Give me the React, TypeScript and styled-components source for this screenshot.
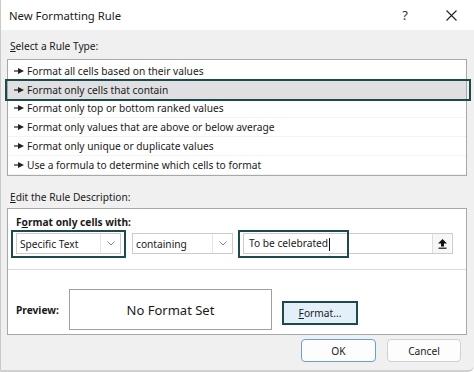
import styled, { createGlobalStyle } from "styled-components";
import { FC, PropsWithChildren } from "react";

const GlobalStyle = createGlobalStyle`
  html, body {
    margin: 0;
    padding: 0;
    background: #ffffff;
  }
  * {
    box-sizing: border-box;
  }
`;

const TEAL = "#1d4a4a";
const FONT = `"Noto Sans", "Open Sans", "Liberation Sans", sans-serif`;
const TEXT_SIZE = "10.2px";

const Window = styled.div`
  display: flex;
  flex-direction: column;
  width: 474px;
  height: 372px;
  background: #f0f0f0;
  font-family: ${FONT};
  color: #1a1a1a;
  overflow: hidden;
  border-left: 1px solid #c9c9c9;
  border-bottom: 2px solid #d0d0d0;
  border-bottom-right-radius: 6px;
`;

const TitleBar = styled.div`
  display: flex;
  align-items: center;
  height: 30px;
  flex-shrink: 0;
  background: #ffffff;
  padding-left: 8px;
`;

const Title = styled.div`
  flex: 1;
  font-size: 11.3px;
  color: #1a1a1a;
`;

const TitleIcon = styled.div`
  display: flex;
  align-items: center;
  justify-content: center;
  width: 46px;
  height: 30px;
  font-size: 13px;
  color: #333;
`;

const Content = styled.div`
  display: flex;
  flex-direction: column;
  padding: 0 7px 0 6px;
`;

const SectionLabel = styled.div<{ top: number }>`
  font-size: ${TEXT_SIZE};
  line-height: 15px;
  margin-top: ${({ top }) => top}px;
  padding-left: 3px;
`;

const Key = styled.span`
  text-decoration: underline;
  text-underline-offset: 1px;
`;

const ListBox = styled.div`
  display: flex;
  flex-direction: column;
  margin-top: 5px;
  height: 117px;
  background: #ffffff;
  border: 1px solid #a8a8a8;
  padding-top: 2px;
`;

const RuleRow = styled.div<{ selected?: boolean }>`
  position: relative;
  display: flex;
  align-items: center;
  gap: 3px;
  height: 18.8px;
  padding-left: 6px;
  font-size: ${TEXT_SIZE};
  background: ${({ selected }) => (selected ? "#e0e0e3" : "transparent")};
  border-bottom: 1px solid ${({ selected }) => (selected ? "transparent" : "#f3f3f3")};

  &::after {
    content: "";
    display: ${({ selected }) => (selected ? "block" : "none")};
    position: absolute;
    left: -3px;
    right: -5px;
    top: -2px;
    bottom: -2px;
    border: 2px solid ${TEAL};
  }
`;

const Arrow: FC = () => (
  <svg width="10" height="6" viewBox="0 0 10 6">
    <rect x="0" y="2.4" width="5" height="1.2" fill="#222" />
    <polygon points="4,0 10,3 4,6" fill="#222" />
  </svg>
);

const DescBox = styled.div`
  display: flex;
  flex-direction: column;
  margin-top: 3px;
  height: 127px;
  background: #ffffff;
  border: 1px solid #a8a8a8;
`;

const DescHeading = styled.div`
  font-size: ${TEXT_SIZE};
  font-weight: 700;
  line-height: 15px;
  padding: 6px 0 0 8px;
`;

const ControlsRow = styled.div`
  display: flex;
  align-items: center;
  gap: 6px;
  padding: 0 13px 0 3px;
  height: 27px;
`;

const FocusRing = styled.div`
  display: flex;
  border: 2px solid ${TEAL};
  padding: 1.5px 3px;
`;

const Select = styled.div<{ width: number }>`
  display: flex;
  align-items: center;
  width: ${({ width }) => width}px;
  height: 21px;
  background: #ffffff;
  border: 1px solid #cccccc;
  font-size: ${TEXT_SIZE};
  padding-left: 3px;
`;

const SelectText = styled.div`
  flex: 1;
`;

const SelectChevron = styled.div`
  display: flex;
  align-items: center;
  justify-content: center;
  width: 20px;
  height: 100%;
  border-left: 1px solid #e6e6e6;
`;

const Chevron: FC = () => (
  <svg width="8" height="5" viewBox="0 0 8 5">
    <polyline points="0.5,0.5 4,4 7.5,0.5" fill="none" stroke="#8a8a8a" strokeWidth="1" />
  </svg>
);

const TextInput = styled.div`
  position: relative;
  display: flex;
  align-items: center;
  flex: 1;
  height: 21px;
  margin-left: 4px;
  background: #ffffff;
  border: 1px solid #cccccc;
  font-size: ${TEXT_SIZE};
  padding-left: 5px;

  &::after {
    content: "";
    position: absolute;
    left: -6px;
    top: -4px;
    width: 107px;
    bottom: -5px;
    border: 2px solid ${TEAL};
  }
`;

const Caret = styled.span`
  display: inline-block;
  width: 1px;
  height: 13px;
  background: #111;
  vertical-align: middle;
  margin-left: 1px;
`;

const InputText = styled.div`
  flex: 1;
`;

const CollapseButton = styled.div`
  display: flex;
  align-items: center;
  justify-content: center;
  width: 19px;
  height: 19px;
  margin-right: 1px;
  background: #f7f7f7;
  border-left: 1px solid #dddddd;
`;

const UploadArrow: FC = () => (
  <svg width="9" height="10" viewBox="0 0 9 10">
    <polygon points="4.5,0 9,4.5 6,4.5 6,7.5 3,7.5 3,4.5 0,4.5" fill="#111" />
    <rect x="0.5" y="8.6" width="8" height="1.2" fill="#111" />
  </svg>
);

const Divider = styled.div`
  height: 1px;
  background: #dadada;
  margin-top: 12px;
`;

const PreviewRow = styled.div`
  display: flex;
  align-items: center;
  padding: 19px 0 0 8px;
`;

const PreviewLabel = styled.div`
  width: 53px;
  font-size: ${TEXT_SIZE};
  font-weight: 700;
`;

const PreviewBox = styled.div`
  display: flex;
  align-items: center;
  justify-content: center;
  width: 203px;
  height: 41px;
  border: 1px solid #a0a0a0;
  font-size: 13px;
`;

const Button = styled.div<{ focused?: boolean; primary?: boolean; width: number }>`
  display: flex;
  align-items: center;
  justify-content: center;
  width: ${({ width }) => width}px;
  height: ${({ focused }) => (focused ? 24 : 23)}px;
  font-size: ${TEXT_SIZE};
  background: ${({ focused }) => (focused ? "#e3eff9" : "#fdfdfd")};
  border: ${({ focused, primary }) =>
    focused ? `2px solid ${TEAL}` : primary ? "1px solid #6a9fcf" : "1px solid #d0d0d0"};
  border-radius: ${({ focused }) => (focused ? 0 : 4)}px;
`;

const FormatButton = styled(Button)`
  margin-left: 10px;
  margin-top: 6px;
`;

const Footer = styled.div`
  display: flex;
  justify-content: flex-end;
  gap: 11px;
  margin-top: 4px;
  padding-right: 6px;
`;

const ListItem: FC<PropsWithChildren<{ selected?: boolean }>> = ({ selected, children }) => (
  <RuleRow selected={selected}>
    <Arrow />
    <span>{children}</span>
  </RuleRow>
);

const rules = [
  "Format all cells based on their values",
  "Format only cells that contain",
  "Format only top or bottom ranked values",
  "Format only values that are above or below average",
  "Format only unique or duplicate values",
  "Use a formula to determine which cells to format",
];

export default function App() {
  return (
    <>
      <GlobalStyle />
      <Window>
        <TitleBar>
          <Title>New Formatting Rule</Title>
          <TitleIcon>?</TitleIcon>
          <TitleIcon>
            <svg width="11" height="11" viewBox="0 0 11 11">
              <path d="M0.5 0.5 L10.5 10.5 M10.5 0.5 L0.5 10.5" stroke="#222" strokeWidth="1.1" />
            </svg>
          </TitleIcon>
        </TitleBar>
        <Content>
          <SectionLabel top={9}>
            <Key>S</Key>elect a Rule Type:
          </SectionLabel>
          <ListBox>
            {rules.map((r, i) => (
              <ListItem key={r} selected={i === 1}>
                {r}
              </ListItem>
            ))}
          </ListBox>
          <SectionLabel top={14}>
            <Key>E</Key>dit the Rule Description:
          </SectionLabel>
          <DescBox>
            <DescHeading>
              F<Key>o</Key>rmat only cells with:
            </DescHeading>
            <ControlsRow>
              <FocusRing>
                <Select width={105}>
                  <SelectText>Specific Text</SelectText>
                  <SelectChevron>
                    <Chevron />
                  </SelectChevron>
                </Select>
              </FocusRing>
              <Select width={101}>
                <SelectText>containing</SelectText>
                <SelectChevron>
                  <Chevron />
                </SelectChevron>
              </Select>
              <TextInput>
                <InputText>
                  To be celebrated
                  <Caret />
                </InputText>
                <CollapseButton>
                  <UploadArrow />
                </CollapseButton>
              </TextInput>
            </ControlsRow>
            <Divider />
            <PreviewRow>
              <PreviewLabel>Preview:</PreviewLabel>
              <PreviewBox>No Format Set</PreviewBox>
              <FormatButton focused width={76}>
                <span>
                  <Key>F</Key>ormat...
                </span>
              </FormatButton>
            </PreviewRow>
          </DescBox>
          <Footer>
            <Button primary width={75}>
              OK
            </Button>
            <Button width={74}>Cancel</Button>
          </Footer>
        </Content>
      </Window>
    </>
  );
}
